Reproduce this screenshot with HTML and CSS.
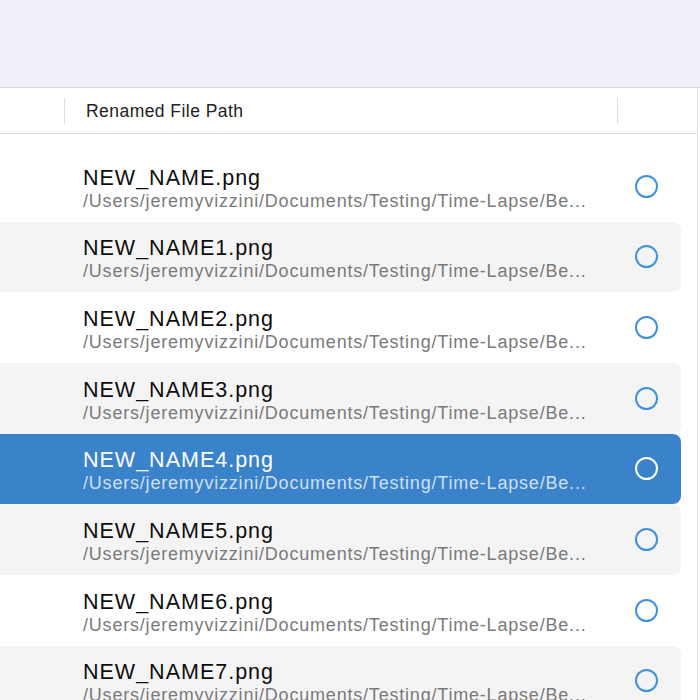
FILE: index.html
```html
<!DOCTYPE html>
<html lang="en">
<head>
  <meta charset="UTF-8" />
  <title>Rename Files</title>
  <link rel="stylesheet" href="styles.css">
</head>
<body>
  <div class="toolbar"></div>

  <div class="panel">
    <div class="table-header">
      <div class="col col-old"></div>
      <div class="col col-new">Renamed File Path</div>
      <div class="col col-status"></div>
    </div>

    <div class="rows" id="rows"></div>
  </div>

  <script>
    const base = "/Users/jeremyvizzini/Documents/Testing/Time-Lapse/Be...";
    const names = ["", "1", "2", "3", "4", "5", "6", "7"];
    const selected = 4;
    const rows = document.getElementById("rows");

    names.forEach(function (n, i) {
      const row = document.createElement("div");
      row.className = "row" + (i % 2 ? " striped" : "") + (i === selected ? " selected" : "");
      row.innerHTML =
        '<div class="file">' +
          '<div class="name">NEW_NAME' + n + '.png</div>' +
          '<div class="path">' + base + '</div>' +
        '</div>' +
        '<div class="status"><span class="ring"></span></div>';
      rows.appendChild(row);
    });
  </script>
</body>
</html>
```

FILE: styles.css
```css
body {
  margin: 0;
  width: 700px;
  height: 700px;
  overflow: hidden;
  font-family: "Liberation Sans", Arial, sans-serif;
  background: #fff;
  color: #1d1d1d;
}

.toolbar {
  height: 87px;
  background: #f0f0f8;
  border-bottom: 1px solid #d9d9de;
}

.panel {
  width: 697px;
  height: 612px;
  border-right: 1px solid #dedede;
  overflow: hidden;
}

.table-header {
  display: flex;
  align-items: center;
  height: 45px;
  border-bottom: 1px solid #dcdcdc;
  font-size: 17.5px;
  letter-spacing: 0.45px;
  color: #222;
}

.col {
  height: 26px;
  display: flex;
  align-items: center;
}

.col-old {
  width: 64px;
  border-right: 1px solid #dcdcdc;
}

.col-new {
  width: 531px;
  padding-left: 21px;
  padding-top: 2px;
  box-sizing: border-box;
  width: 553px;
  border-right: 1px solid #dcdcdc;
}

.rows {
  padding-top: 17px;
}

.row {
  display: flex;
  align-items: center;
  height: 70.67px;
  width: 691px;
  margin-left: -10px;
  border-radius: 0 8px 8px 0;
  box-sizing: border-box;
}

.row.striped {
  background: #f4f4f5;
}

.row.selected {
  background: #3a82c9;
}

.file {
  flex: 1;
  padding-left: 93px;
  padding-top: 6px;
}

.name {
  font-size: 21.5px;
  letter-spacing: 1px;
  color: #0d0d0d;
  line-height: 23px;
}

.path {
  font-size: 18px;
  letter-spacing: 0.8px;
  color: #7a7a7a;
  line-height: 22px;
  white-space: nowrap;
}

.selected .name {
  color: #fff;
}

.selected .path {
  color: #cfe0f3;
}

.status {
  width: 46px;
  display: flex;
  justify-content: flex-start;
}

.ring {
  width: 19px;
  height: 19px;
  border: 2.8px solid #3f91e0;
  border-radius: 50%;
}

.selected .ring {
  border-color: #fff;
}
```
